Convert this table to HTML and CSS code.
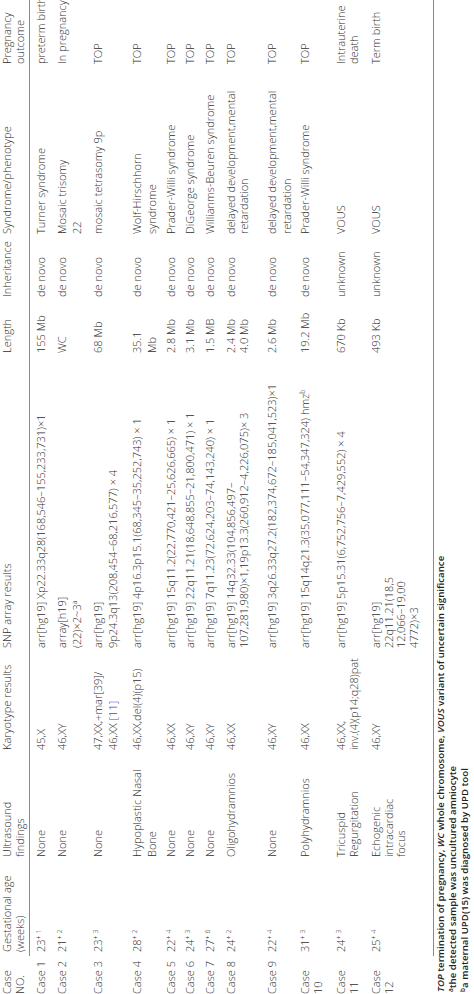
FILE: index.html
```html
<!DOCTYPE html>
<html>
<head>
<meta charset="utf-8">
<link rel="stylesheet" href="styles.css">
</head>
<body>
<div class="page">
  <div class="sheet">
    <div class="table">
      <div class="row head">
        <div>Case<br>NO.</div>
        <div>Gestational age<br>(weeks)</div>
        <div>Ultrasound<br>findings</div>
        <div>Karyotype results</div>
        <div>SNP array results</div>
        <div>Length</div>
        <div>Inheritance</div>
        <div>Syndrome/phenotype</div>
        <div>Pregnancy<br>outcome</div>
      </div>
      <div class="row h19">
        <div>Case 1</div><div>23<sup>+ 1</sup></div><div>None</div><div>45,X</div>
        <div>arr[hg19] Xp22.33q28(168,546–155,233,731)×1</div><div>155 Mb</div><div>de novo</div><div>Turner syndrome</div><div>preterm birth</div>
      </div>
      <div class="row h36 loose">
        <div>Case 2</div><div>21<sup>+ 2</sup></div><div>None</div><div>46,XY</div>
        <div>array[h19]<br>(22)×2~3<sup>a</sup></div><div>WC</div><div>de novo</div><div>Mosaic trisomy<br>22</div><div>In pregnancy</div>
      </div>
      <div class="row h39 loose">
        <div>Case 3</div><div>23<sup>+ 3</sup></div><div>None</div><div>47,XX,+mar[39]/<br>46,XX <span class="ref">[11]</span></div>
        <div>arr[hg19]<br>9p24.3q13(208,454–68,216,577) × 4</div><div>68 Mb</div><div>de novo</div><div>mosaic tetrasomy 9p</div><div>TOP</div>
      </div>
      <div class="row h36 loose">
        <div>Case 4</div><div>28<sup>+ 2</sup></div><div>Hypoplastic Nasal<br>Bone</div><div>46,XX,del(4)(p15)</div>
        <div>arr[hg19] 4p16.3p15.1(68,345–35,252,743) × 1</div><div>35.1<br>Mb</div><div>de novo</div><div>Wolf-Hirschhorn<br>syndrome</div><div>TOP</div>
      </div>
      <div class="row h19">
        <div>Case 5</div><div>22<sup>+ 4</sup></div><div>None</div><div>46,XX</div>
        <div>arr[hg19] 15q11.2(22,770,421–25,626,665) × 1</div><div>2.8 Mb</div><div>de novo</div><div>Prader-Willi syndrome</div><div>TOP</div>
      </div>
      <div class="row h20">
        <div>Case 6</div><div>24<sup>+ 3</sup></div><div>None</div><div>46,XY</div>
        <div>arr[hg19] 22q11.21(18,648,855–21,800,471) × 1</div><div>3.1 Mb</div><div>de novo</div><div>DiGeorge syndrome</div><div>TOP</div>
      </div>
      <div class="row h21">
        <div>Case 7</div><div>27<sup>+ 6</sup></div><div>None</div><div>46,XY</div>
        <div>arr[hg19] 7q11.23(72,624,203–74,143,240) × 1</div><div>1.5 MB</div><div>de novo</div><div>Willianms-Beuren syndrome</div><div>TOP</div>
      </div>
      <div class="row h39">
        <div>Case 8</div><div>24<sup>+ 2</sup></div><div>Oligohydramnios</div><div>46,XX</div>
        <div>arr[hg19] 14q32.33(104,856,497–<br>107,281,980)×1,19p13.3(260,912–4,226,075)× 3</div><div>2.4 Mb<br>4.0 Mb</div><div>de novo</div><div>delayed development,mental<br>retardation</div><div>TOP</div>
      </div>
      <div class="row h35 loose">
        <div>Case 9</div><div>22<sup>+ 4</sup></div><div>None</div><div>46,XY</div>
        <div>arr[hg19] 3q26.33q27.2(182,374,672–185,041,523)×1</div><div>2.6 Mb</div><div>de novo</div><div>delayed development,mental<br>retardation</div><div>TOP</div>
      </div>
      <div class="row h36">
        <div>Case<br>10</div><div>31<sup>+ 3</sup></div><div>Polyhydramnios</div><div>46,XX</div>
        <div>arr[hg19] 15q14q21.3(35,077,111–54,347,324) hmz<sup>b</sup></div><div>19.2 Mb</div><div>de novo</div><div>Prader-Willi syndrome</div><div>TOP</div>
      </div>
      <div class="row h35">
        <div>Case<br>11</div><div>24<sup>+ 3</sup></div><div>Tricuspid<br>Regurgitation</div><div>46,XX,<br>inv.(4)(p14;q28)pat</div>
        <div>arr[hg19] 5p15.31(6,752,756–7,429,552) × 4</div><div>670 Kb</div><div>unknown</div><div>VOUS</div><div>Intrauterine<br>death</div>
      </div>
      <div class="row h68">
        <div>Case<br>12</div><div>25<sup>+ 4</sup></div><div>Echogenic<br>intracardiac<br>focus</div><div>46,XY</div>
        <div>arr[hg19]<br>22q11.21(18,5<br>12,066–19,00<br>4772)×3</div><div>493 Kb</div><div>unknown</div><div>VOUS</div><div>Term birth</div>
      </div>
    </div>
    <div class="notes">
      <p><i>TOP</i> termination of pregnancy, <i>WC</i> whole chromosome, <i>VOUS</i> variant of uncertain significance</p>
      <p><sup>a</sup>the detected sample was uncultured amniocyte</p>
      <p><sup>b</sup>a maternal UPD(15) was diagnosed by UPD tool</p>
    </div>
  </div>
</div>
</body>
</html>
```

FILE: styles.css
```css
html, body {
  margin: 0;
  padding: 0;
  background: #ffffff;
}

.page {
  width: 474px;
  height: 994px;
  overflow: hidden;
  position: relative;
}

.sheet {
  width: 994px;
  height: 474px;
  transform-origin: 0 0;
  transform: translateY(994px) rotate(-90deg);
  font-family: "Open Sans", "Noto Sans", sans-serif;
  font-weight: 300;
  font-size: 11px;
  color: #2e2e2e;
  overflow: hidden;
}

.table {
  display: flex;
  flex-direction: column;
  padding-bottom: 1px;
  background: linear-gradient(#8a8a8a, #8a8a8a) no-repeat 38px 100% / calc(100% - 38px) 1px;
}

.row {
  display: grid;
  grid-template-columns: 42px 95px 107px 102px 295px 56px 63px 170px 100px;
  white-space: nowrap;
  line-height: 12.5px;
  padding-top: 5px;
  box-sizing: border-box;
}

.row.head {
  height: 30px;
  padding-top: 0;
  line-height: 13px;
  background: linear-gradient(#8a8a8a, #8a8a8a) no-repeat 38px 100% / calc(100% - 38px) 1px;
}

.row.loose {
  line-height: 15px;
}

.h19 { height: 19px; }
.h20 { height: 20px; }
.h21 { height: 21px; }
.h35 { height: 35px; }
.h36 { height: 36px; }
.h39 { height: 39px; }
.h68 { height: 68px; }

sup {
  font-size: 7px;
  line-height: 0;
  vertical-align: 4px;
}

.ref {
  color: #4a4ad0;
}

.notes {
  padding: 1px 0 0 2px;
  font-weight: 600;
  font-size: 9.7px;
  line-height: 12px;
  color: #222222;
}

.notes p {
  margin: 0;
  white-space: nowrap;
}

.notes sup {
  font-size: 6.5px;
  vertical-align: 3px;
}
```
